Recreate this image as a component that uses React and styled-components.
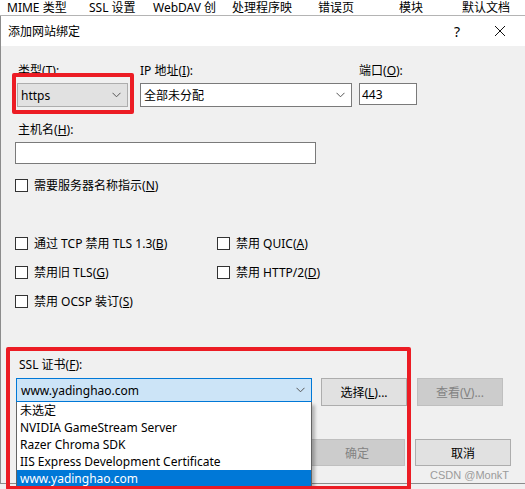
import React from 'react'
import styled, { createGlobalStyle } from 'styled-components';

const GlobalStyle = createGlobalStyle`
    html, body {
        margin: 0;
        padding: 0;
        background: #f0f0f0;
    }
    body {
        font-family: "Noto Sans", "Noto Sans CJK SC", sans-serif;
        font-size: 12px;
        color: #000;
    }
`;

const Screen = styled.div`
    position: relative;
    width: 525px;
    height: 489px;
    overflow: hidden;
    background: #f0f0f0;
`;

const TabStrip = styled.div`
    display: flex;
    height: 15px;
    padding-left: 7px;
    background: #fff;
    border-bottom: 1px solid #b4b4b4;
`;

const Tab = styled.div`
    width: ${props => props.w}px;
    flex-shrink: 0;
    white-space: nowrap;
    font-size: 12px;
    line-height: 15px;
    height: 15px;
`;

const Dialog = styled.div`
    height: 467px;
    border-left: 1px solid #8c8c8c;
    border-bottom: 1px solid #8c8c8c;
    display: flex;
    flex-direction: column;
`;

const TitleBar = styled.div`
    height: 30px;
    background: #fff;
    display: flex;
    align-items: center;
    padding-left: 7px;
`;

const Title = styled.div`
    flex: 1;
`;

const TitleButton = styled.div`
    width: ${props => props.w}px;
    font-size: ${props => props.size || 13}px;
    display: flex;
    justify-content: center;
`;

const Body = styled.div`
    flex: 1;
    display: flex;
    flex-direction: column;
    padding: 17px 0 0 14px;
`;

const Row = styled.div`
    display: flex;
    align-items: flex-start;
    margin-top: ${props => props.mt || 0}px;
`;

const Field = styled.div`
    display: flex;
    flex-direction: column;
    width: ${props => props.w}px;
    margin-left: ${props => props.ml || 0}px;
    margin-top: ${props => props.mt || 0}px;
`;

const Label = styled.div`
    height: 16px;
    line-height: 16px;
    margin-left: ${props => props.ml || 0}px;
    margin-bottom: 4px;
    white-space: nowrap;
`;

// access key like (T) - keep latin parentheses
const Key = styled.span`
    font-family: "Noto Sans", sans-serif;
`;

const Select = styled.div`
    box-sizing: border-box;
    height: 24px;
    display: flex;
    align-items: center;
    padding: 0 6px 0 3px;
    background: ${props => props.gray ? '#e1e1e1' : '#fff'};
    border: 1px solid ${props => props.gray ? '#adadad' : '#7a7a7a'};
`;

const SelectText = styled.span`
    flex: 1;
`;

const Input = styled.div`
    box-sizing: border-box;
    height: 22px;
    display: flex;
    align-items: center;
    padding-left: 2px;
    background: #fff;
    border: 1px solid #7a7a7a;
`;

const CheckRow = styled.label`
    display: flex;
    align-items: center;
    gap: 6px;
    height: 16px;
    white-space: nowrap;
`;

const Box = styled.span`
    box-sizing: border-box;
    width: 13px;
    height: 13px;
    border: 1px solid #333;
    background: #fff;
    flex-shrink: 0;
`;

const CheckGrid = styled.div`
    display: grid;
    grid-template-columns: 202px 1fr;
    row-gap: 13px;
    margin-top: 42px;
`;

const ComboWrap = styled.div`
    position: relative;
    width: 296px;
    margin-left: 1px;
`;

const Combo = styled.div`
    box-sizing: border-box;
    height: 24px;
    display: flex;
    align-items: center;
    padding: 0 6px 0 4px;
    background: #cce4f7;
    border: 1px solid #0078d7;
`;

const DropList = styled.div`
    position: absolute;
    top: 24px;
    left: 0;
    width: 296px;
    box-sizing: border-box;
    background: #fff;
    border: 1px solid #646464;
    border-top: none;
    box-shadow: 3px 3px 3px rgba(0, 0, 0, 0.25);
    z-index: 2;
`;

const Option = styled.div`
    height: 17px;
    line-height: 17px;
    padding-left: 3px;
    white-space: nowrap;
    background: ${props => props.selected ? '#0078d7' : 'transparent'};
    color: ${props => props.selected ? '#fff' : '#000'};
`;

const Button = styled.div`
    box-sizing: border-box;
    width: ${props => props.w || 86}px;
    height: ${props => props.h || 28}px;
    margin-left: ${props => props.ml || 0}px;
    display: flex;
    align-items: center;
    justify-content: center;
    background: ${props => props.disabled ? '#cccccc' : '#e1e1e1'};
    border: 1px solid ${props => props.disabled ? '#bfbfbf' : '#adadad'};
    color: ${props => props.disabled ? '#838383' : '#000'};
`;

const ButtonRow = styled.div`
    display: flex;
    justify-content: flex-end;
    gap: 10px;
    margin-top: 33px;
    padding-right: 14px;
`;

const Watermark = styled.div`
    align-self: flex-end;
    margin: 2px 16px 0 0;
    font-size: 11px;
    line-height: 14px;
    color: #9b9b9b;
    font-family: "Liberation Sans", "Noto Sans", sans-serif;
`;

const Highlight = styled.div`
    position: absolute;
    box-sizing: border-box;
    left: ${props => props.x}px;
    top: ${props => props.y}px;
    width: ${props => props.w}px;
    height: ${props => props.h}px;
    border: 4px solid #ec1c24;
    border-radius: 2px;
    z-index: 5;
    pointer-events: none;
`;

const Chevron = ({ color = '#555' }) => (
    <svg width="9" height="6" viewBox="0 0 9 6">
        <path d="M0.5 0.8 L4.5 4.8 L8.5 0.8" fill="none" stroke={color} strokeWidth="1" />
    </svg>
);

const Close = () => (
    <svg width="12" height="12" viewBox="0 0 12 12">
        <path d="M1 1 L11 11 M11 1 L1 11" stroke="#111" strokeWidth="1" />
    </svg>
);

const K = ({ k, dots }) => (
    <Key>(<u>{k}</u>){dots ? '...' : ''}</Key>
);

const tabs = [
    ['MIME 类型', 82], ['SSL 设置', 64], ['WebDAV 创', 79], ['处理程序映', 86],
    ['错误页', 81], ['模块', 63], ['默认文档', 60],
];

const certs = [
    '未选定',
    'NVIDIA GameStream Server',
    'Razer Chroma SDK',
    'IIS Express Development Certificate',
    'www.yadinghao.com',
];

const App = () => {
    return (
        <Screen>
            <GlobalStyle />
            <TabStrip>
                {tabs.map(([t, w]) => <Tab key={t} w={w}>{t}</Tab>)}
            </TabStrip>
            <Dialog>
                <TitleBar>
                    <Title>添加网站绑定</Title>
                    <TitleButton w={36} size={14}>?</TitleButton>
                    <TitleButton w={50}><Close /></TitleButton>
                </TitleBar>
                <Body>
                    <Row>
                        <Field w={111} ml={2}>
                            <Label ml={1}>类型<K k="T" />:</Label>
                            <Select gray>
                                <SelectText>https</SelectText>
                                <Chevron />
                            </Select>
                        </Field>
                        <Field w={212} ml={12}>
                            <Label>IP 地址<K k="I" />:</Label>
                            <Select>
                                <SelectText>全部未分配</SelectText>
                                <Chevron />
                            </Select>
                        </Field>
                        <Field w={58} ml={7}>
                            <Label>端口<K k="O" />:</Label>
                            <Input>443</Input>
                        </Field>
                    </Row>
                    <Field w={301} mt={15}>
                        <Label ml={3}>主机名<K k="H" />:</Label>
                        <Input />
                    </Field>
                    <Row mt={13}>
                        <CheckRow><Box /><span>需要服务器名称指示<K k="N" /></span></CheckRow>
                    </Row>
                    <CheckGrid>
                        <CheckRow><Box /><span>通过 TCP 禁用 TLS 1.3<K k="B" /></span></CheckRow>
                        <CheckRow><Box /><span>禁用 QUIC<K k="A" /></span></CheckRow>
                        <CheckRow><Box /><span>禁用旧 TLS<K k="G" /></span></CheckRow>
                        <CheckRow><Box /><span>禁用 HTTP/2<K k="D" /></span></CheckRow>
                        <CheckRow><Box /><span>禁用 OCSP 装订<K k="S" /></span></CheckRow>
                    </CheckGrid>
                    <Field w={300} mt={48}>
                        <Label ml={4}>SSL 证书<K k="F" />:</Label>
                    </Field>
                    <Row mt={1}>
                        <ComboWrap>
                            <Combo>
                                <SelectText>www.yadinghao.com</SelectText>
                                <Chevron />
                            </Combo>
                            <DropList>
                                {certs.map((c, i) => (
                                    <Option key={c} selected={i === certs.length - 1}>{c}</Option>
                                ))}
                            </DropList>
                        </ComboWrap>
                        <Button ml={9}>选择<K k="L" dots /></Button>
                        <Button ml={10} disabled>查看<K k="V" dots /></Button>
                    </Row>
                    <ButtonRow>
                        <Button w={96} h={27} disabled>确定</Button>
                        <Button w={96} h={27}>取消</Button>
                    </ButtonRow>
                    <Watermark>CSDN @MonkT</Watermark>
                </Body>
            </Dialog>
            <Highlight x={12} y={73} w={122} h={41} />
            <Highlight x={6} y={347} w={405} h={143} />
        </Screen>
    )
}

export default App
